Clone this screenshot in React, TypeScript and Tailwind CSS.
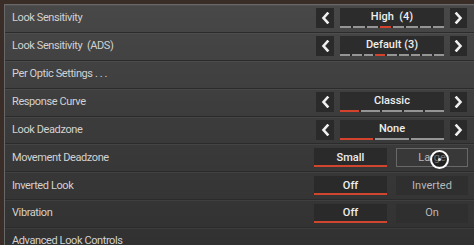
import React from 'react';

type Row =
    | { label: string; kind: 'none' }
    | { label: string; kind: 'arrows'; value: string; segments: number; active: number }
    | { label: string; kind: 'pair'; left: string; right: string; cursor?: boolean };

const rows: Row[] = [
    { label: 'Look Sensitivity', kind: 'arrows', value: 'High  (4)', segments: 8, active: 3 },
    { label: 'Look Sensitivity  (ADS)', kind: 'arrows', value: 'Default (3)', segments: 9, active: 3 },
    { label: 'Per Optic Settings . . .', kind: 'none' },
    { label: 'Response Curve', kind: 'arrows', value: 'Classic', segments: 5, active: 0 },
    { label: 'Look Deadzone', kind: 'arrows', value: 'None', segments: 3, active: 0 },
    { label: 'Movement Deadzone', kind: 'pair', left: 'Small', right: 'Large', cursor: true },
    { label: 'Inverted Look', kind: 'pair', left: 'Off', right: 'Inverted' },
    { label: 'Vibration', kind: 'pair', left: 'Off', right: 'On' },
    { label: 'Advanced Look Controls', kind: 'none' },
];

function Chevron({ dir }: { dir: 'left' | 'right' }) {
    return (
        <svg width="9" height="12" viewBox="0 0 9 12" fill="none">
            <polyline
                points={dir === 'left' ? '6.5,1.5 2.5,6 6.5,10.5' : '2.5,1.5 6.5,6 2.5,10.5'}
                stroke="#f0f0f0"
                strokeWidth="2.6"
                strokeLinecap="square"
            />
        </svg>
    );
}

function ArrowControl({ value, segments, active }: { value: string; segments: number; active: number }) {
    return (
        <div className="flex items-center gap-[6px] mr-[7px]">
            <div className="w-[18px] h-[20px] bg-[#2a2a2a] flex items-center justify-center">
                <Chevron dir="left" />
            </div>
            <div className="relative w-[104px] h-[20px] bg-[#2c2c2c] flex items-center justify-center">
                <span className="text-[11px] font-medium text-[#eeeeee] whitespace-pre -mt-[2px]">{value}</span>
                <div className="absolute left-0 right-0 bottom-0 flex gap-[2px] h-[2px]">
                    {Array.from({ length: segments }).map((_, i) => (
                        <div key={i} className={`flex-1 ${i === active ? 'bg-[#d2422c]' : 'bg-[#959595]'}`} />
                    ))}
                </div>
            </div>
            <div className="w-[17px] h-[20px] bg-[#2a2a2a] flex items-center justify-center">
                <Chevron dir="right" />
            </div>
        </div>
    );
}

function PairControl({ left, right, cursor }: { left: string; right: string; cursor?: boolean }) {
    return (
        <div className="flex items-center gap-[9px] mr-[6px]">
            <div className="relative w-[73px] h-[19px] bg-[#2a2a2a] flex items-center justify-center">
                <span className="text-[11px] font-medium text-[#eeeeee]">{left}</span>
                <div className="absolute left-0 right-0 bottom-0 h-[2px] bg-[#cf452d]" />
            </div>
            <div
                className={`relative w-[72px] h-[19px] flex items-center justify-center ${cursor ? 'border border-[#686868] bg-[#383838]' : 'bg-[#2f2f2f]'}`}
            >
                <span className="text-[11px] text-[#b8b8b8]">{right}</span>
                {cursor && (
                    <div className="absolute left-[33px] top-[1px] w-[19px] h-[19px] rounded-full border-2 border-white bg-black/40 flex items-center justify-center">
                        <div className="w-[3px] h-[3px] rounded-full bg-white/90" />
                    </div>
                )}
            </div>
        </div>
    );
}

export default function App() {
    return (
        <div
            className="w-[474px] h-[245px] overflow-hidden bg-[#3a2d27] pl-[4px] pt-[4px]"
            style={{ fontFamily: 'Roboto, "Liberation Sans", sans-serif' }}
        >
            <div className="h-full border-t border-l border-[#686868] bg-gradient-to-b from-[#484848] via-[#3b3b3b] to-[#313131]">
                {rows.map((row, i) => (
                    <div
                        key={i}
                        className="h-[27.9px] flex items-center justify-between pl-[7px] border-b border-[#2b2b2b] shadow-[inset_0_1px_0_rgba(255,255,255,0.05)]"
                    >
                        <span className="text-[11px] text-[#d2d2d2] whitespace-pre tracking-[-0.4px]">{row.label}</span>
                        {row.kind === 'arrows' && (
                            <ArrowControl value={row.value} segments={row.segments} active={row.active} />
                        )}
                        {row.kind === 'pair' && <PairControl left={row.left} right={row.right} cursor={row.cursor} />}
                    </div>
                ))}
            </div>
        </div>
    );
}
